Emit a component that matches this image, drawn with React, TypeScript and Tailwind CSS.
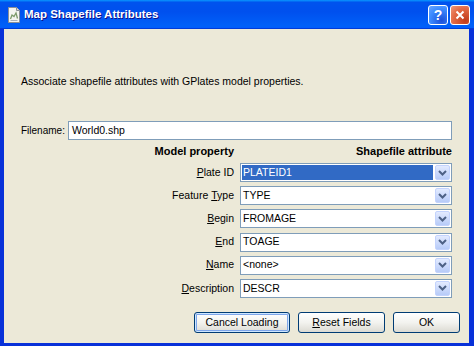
import React from "react";

const rows = [
  { pre: "", key: "P", post: "late ID", value: "PLATEID1", selected: true },
  { pre: "Feature\u00a0", key: "T", post: "ype", value: "TYPE" },
  { pre: "", key: "B", post: "egin", value: "FROMAGE" },
  { pre: "", key: "E", post: "nd", value: "TOAGE" },
  { pre: "", key: "N", post: "ame", value: "<none>" },
  { pre: "", key: "D", post: "escription", value: "DESCR" },
];

function AppIcon() {
  return (
    <svg width="14" height="16" viewBox="0 0 14 16">
      <path d="M1.5 0.5 H9.5 L12.5 3.5 V15.5 H1.5 Z" fill="#f4f4f0" stroke="#8a8f96" />
      <path d="M9.5 0.5 V3.5 H12.5" fill="#dcdcd6" stroke="#8a8f96" />
      <path d="M3.5 12 L5 8 L7 9.5 L9 6 L10.5 11.5" fill="none" stroke="#7d9a6a" strokeWidth="1.3" />
      <path d="M3.5 13.5 H10.5" stroke="#a9b1ba" />
    </svg>
  );
}

function Chevron() {
  return (
    <svg width="9" height="6" viewBox="0 0 9 6">
      <path d="M1 1 L4.5 4.5 L8 1" fill="none" stroke="#4d6185" strokeWidth="2" />
    </svg>
  );
}

function Combo({ value, selected }: { value: string; selected?: boolean }) {
  return (
    <div className="flex h-[19px] border border-[#7f9db9] bg-white">
      <div className="flex flex-1 p-[1px]">
        <div
          className={`flex flex-1 items-center pl-[1px] ${
            selected ? "bg-[#316ac5] text-white" : "text-black"
          }`}
        >
          {value}
        </div>
      </div>
      <div className="m-[1px] flex w-[15px] items-center justify-center rounded-[2px] border border-[#c3d3fd] bg-gradient-to-b from-[#e3ebff] to-[#b7cbf8]">
        <Chevron />
      </div>
    </div>
  );
}

function XpButton({
  children,
  width,
  focused,
}: {
  children: React.ReactNode;
  width: string;
  focused?: boolean;
}) {
  return (
    <button
      className={`flex h-[21px] items-center justify-center rounded-[3px] border border-[#003c74] bg-gradient-to-b from-[#ffffff] via-[#f3f3ef] to-[#dcdbd3] text-black ${width} ${
        focused ? "shadow-[inset_0_0_0_1px_#cee7ff,inset_0_0_0_2px_#7ea6ea]" : ""
      }`}
    >
      {children}
    </button>
  );
}

export default function App() {
  return (
    <div className="flex h-[346px] w-[474px] flex-col bg-[#0831d9] font-['Liberation_Sans',Arial,sans-serif] text-[10.5px]">
      <div className="flex h-[29px] items-center bg-[linear-gradient(180deg,#0997ff,#0053ee_8%,#0050ee_40%,#0060f8_88%,#0060f8_93%,#005bff_95%,#003dd7_96%,#003dd7)] pl-[7px] pr-[4px]">
        <AppIcon />
        <span className="ml-[3px] text-[11.5px] font-bold text-white [text-shadow:1px_1px_#0f1089]">
          Map Shapefile Attributes
        </span>
        <div className="ml-auto flex gap-[2px]">
          <div className="flex h-[20px] w-[20px] items-center justify-center rounded-[3px] border border-white bg-[radial-gradient(circle_at_70%_80%,#1c4fd9,#3c8bff_60%,#6aa7ff)] text-[14px] font-bold leading-none text-white">
            ?
          </div>
          <div className="flex h-[20px] w-[20px] items-center justify-center rounded-[3px] border border-white bg-[radial-gradient(circle_at_80%_80%,#c13b1b,#e36a45_60%,#f09a7c)]">
            <svg width="10" height="10" viewBox="0 0 10 10">
              <path d="M1.5 1.5 L8.5 8.5 M8.5 1.5 L1.5 8.5" stroke="white" strokeWidth="2" />
            </svg>
          </div>
        </div>
      </div>

      <div className="mb-[3px] ml-[4px] mr-[5px] flex flex-1 flex-col bg-[#ece9d8] text-black">
        <p className="pl-[17px] pt-[45px] leading-[14px]">
          Associate shapefile attributes with GPlates model properties.
        </p>

        <div className="mt-[33px] flex h-[19px] items-center px-[17px]">
          <span className="w-[47px] shrink-0 text-[10px]">Filename:</span>
          <div className="flex h-full flex-1 items-center border border-[#7f9db9] bg-white pl-[3px]">
            World0.shp
          </div>
        </div>

        <div className="mt-[4px] grid grid-cols-[213px_212px] gap-x-[6px] px-[17px] text-[11px] font-bold leading-[14px]">
          <span className="text-right">Model property</span>
          <span className="text-right">Shapefile attribute</span>
        </div>

        <div className="mt-[5px] grid grid-cols-[213px_212px] gap-x-[6px] gap-y-[4.2px] px-[17px]">
          {rows.map((r) => (
            <React.Fragment key={r.value}>
              <div className="flex h-[19px] items-center justify-end">
                <span>
                  {r.pre}
                  <u>{r.key}</u>
                  {r.post}
                </span>
              </div>
              <Combo value={r.value} selected={r.selected} />
            </React.Fragment>
          ))}
        </div>

        <div className="mt-[14px] flex justify-end gap-[8px] pr-[9px]">
          <XpButton width="w-[96px]" focused>
            Cancel Loading
          </XpButton>
          <XpButton width="w-[87px]">
            <span>
              <u>R</u>eset Fields
            </span>
          </XpButton>
          <XpButton width="w-[67px]">OK</XpButton>
        </div>
      </div>
    </div>
  );
}
